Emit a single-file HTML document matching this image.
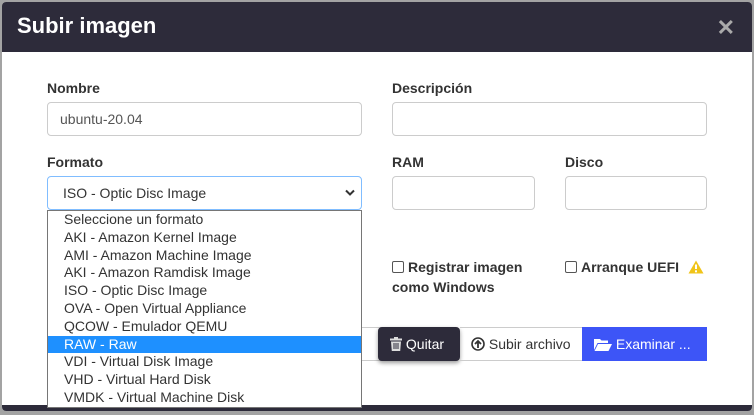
<!DOCTYPE html>
<html><head><style>
*{box-sizing:border-box;margin:0;padding:0}
body{width:754px;height:415px;background:#a3a3a3;font-family:"Liberation Sans",sans-serif;position:relative;overflow:hidden}
.m{position:absolute;left:2px;top:2px;width:750px;height:409px;background:#fff;border-radius:4px;overflow:hidden}
.h{position:absolute;left:0;top:0;right:0;height:50px;background:#2d2b3a;color:#fff}
.h .t{position:absolute;left:15px;top:11px;font-size:22px;font-weight:bold}
.h .x{position:absolute;right:17px;top:13px;font-size:22px;color:#aaa;font-weight:bold}
.bot{position:absolute;left:0;right:0;bottom:0;height:6px;background:#2d2b3a}
.l{position:absolute;font-size:14px;font-weight:bold;color:#333}
.i{position:absolute;border:1px solid #ccc;border-radius:4px;height:34px;font-size:14px;color:#555;padding:8px 12px;background:#fff}
.dd{position:absolute;left:45px;top:208px;width:315px;height:198px;border:1px solid #767676;background:#fff;font-size:14px;color:#333;z-index:5}
.dd div{height:17.8px;line-height:17.8px;padding-left:16px}
.dd .s{background:#1e90ff;color:#fff}
.cb{display:inline-block;width:12px;height:12px;border:1px solid #555;border-radius:2px;vertical-align:-1px;margin-right:4px;background:#fff}
.btn{position:absolute;top:325px;height:34px;font-size:14px;line-height:34px}
svg{vertical-align:-2px}
</style></head><body>
<div class="m">
<div class="h"><div class="t">Subir imagen</div><div class="x">✕</div></div>
<div class="l" style="left:45px;top:78px">Nombre</div>
<div class="i" style="left:45px;top:100px;width:315px">ubuntu-20.04</div>
<div class="l" style="left:390px;top:78px">Descripción</div>
<div class="i" style="left:390px;top:100px;width:315px"></div>
<div class="l" style="left:45px;top:152px">Formato</div>
<div class="i" style="left:45px;top:174px;width:315px;border-color:#80bdff;color:#333;padding-left:15px">ISO - Optic Disc Image<svg style="position:absolute;right:6px;top:12px" width="10" height="7" viewBox="0 0 10 7"><path d="M1 1.5L5 5.5L9 1.5" fill="none" stroke="#333" stroke-width="2"/></svg></div>
<div class="l" style="left:390px;top:152px">RAM</div>
<div class="i" style="left:390px;top:174px;width:143px"></div>
<div class="l" style="left:563px;top:152px">Disco</div>
<div class="i" style="left:563px;top:174px;width:142px"></div>
<div class="l" style="left:390px;top:255px;line-height:20px">
<span class="cb"></span>Registrar imagen<br>como Windows</div>
<div class="l" style="left:563px;top:255px;line-height:20px"><span class="cb"></span>Arranque UEFI <svg style="margin-left:5px" width="16" height="14" viewBox="0 0 16 14"><path d="M8 0.5L15.5 13.5H0.5Z" fill="#f0c419"/><path d="M8 4.5V9" stroke="#fff" stroke-width="2"/><rect x="7" y="10.3" width="2" height="2" fill="#fff"/></svg></div>
<div class="i" style="left:200px;top:325px;width:200px;border-radius:4px 0 0 4px"></div>
<div class="btn" style="left:376px;width:82px;background:#2d2b3a;color:#fff;border-radius:4px;padding-left:12px;box-shadow:0 2px 4px rgba(0,0,0,.4)"><svg width="12" height="14" viewBox="0 0 12 14"><rect x="0" y="1.5" width="12" height="2" fill="#ddd"/><rect x="4" y="0" width="4" height="2" fill="#ddd"/><path d="M1 4.5h10l-0.8 9.5h-8.4z" fill="#ddd"/><path d="M4 6v6M6 6v6M8 6v6" stroke="#2d2b3a" stroke-width="1"/></svg> Quitar</div>
<div class="btn" style="left:458px;width:123px;border-top:1px solid #ccc;border-bottom:1px solid #ccc;line-height:32px;color:#333;padding-left:11px"><svg width="14" height="14" viewBox="0 0 14 14"><circle cx="7" cy="7" r="6" fill="none" stroke="#333" stroke-width="1.6"/><path d="M7 11V4M4 7l3-3 3 3" fill="none" stroke="#333" stroke-width="1.8"/></svg> Subir archivo</div>
<div class="btn" style="left:580px;width:125px;background:#3d55f7;color:#fff;padding-left:12px"><svg width="18" height="13" viewBox="0 0 18 13"><path d="M0 1h6l1.5 1.5H14V5H3.5L0 12Z" fill="#fff"/><path d="M4 6h14l-3.5 7H0.5Z" fill="#fff"/></svg> Examinar ...</div>
<div class="dd">
<div>Seleccione un formato</div><div>AKI - Amazon Kernel Image</div><div>AMI - Amazon Machine Image</div><div>AKI - Amazon Ramdisk Image</div><div>ISO - Optic Disc Image</div><div>OVA - Open Virtual Appliance</div><div>QCOW - Emulador QEMU</div><div class="s">RAW - Raw</div><div>VDI - Virtual Disk Image</div><div>VHD - Virtual Hard Disk</div><div>VMDK - Virtual Machine Disk</div>
</div>
<div class="bot"></div>
</div>
</body></html>
